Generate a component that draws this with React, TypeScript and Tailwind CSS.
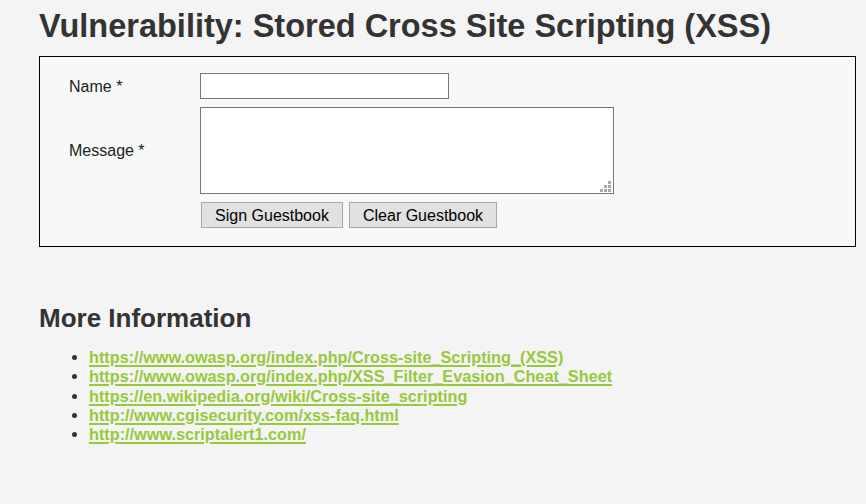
import React from "react";

export default function App() {
  const links = [
    "https://www.owasp.org/index.php/Cross-site_Scripting_(XSS)",
    "https://www.owasp.org/index.php/XSS_Filter_Evasion_Cheat_Sheet",
    "https://en.wikipedia.org/wiki/Cross-site_scripting",
    "http://www.cgisecurity.com/xss-faq.html",
    "http://www.scriptalert1.com/",
  ];
  return (
    <div className="w-[866px] h-[504px] bg-[#f4f4f4] text-[#333] overflow-hidden" style={{ fontFamily: '"Liberation Sans", Arial, sans-serif' }}>
      <div className="pl-[39px] pr-[10px]">
        <h1 className="text-[32.5px] font-bold leading-[37px] pt-[8px] text-[#333]">
          Vulnerability: Stored Cross Site Scripting (XSS)
        </h1>
        <div className="mt-[11px] w-[817px] h-[191px] border border-black bg-[#f7f8f8] pl-[29px] pt-[16px]">
          <div className="flex items-center h-[26px]">
            <div className="w-[131px] text-[16px] leading-[20px] pt-[1px] text-[#222]">Name *</div>
            <div className="w-[249px] h-[26px] border border-[#767676] bg-white"></div>
          </div>
          <div className="flex items-center mt-[8px] h-[87px]">
            <div className="w-[131px] text-[16px] text-[#222]">Message *</div>
            <div className="relative w-[414px] h-[87px] border border-[#767676] bg-white">
              <svg className="absolute right-[2px] bottom-[1px]" width="11" height="11" viewBox="0 0 11 11">
                <rect x="8" y="0" width="3" height="3" fill="#a8a8a8" />
                <rect x="4" y="4" width="3" height="3" fill="#a8a8a8" />
                <rect x="8" y="4" width="3" height="3" fill="#a8a8a8" />
                <rect x="0" y="8" width="3" height="3" fill="#a8a8a8" />
                <rect x="4" y="8" width="3" height="3" fill="#a8a8a8" />
                <rect x="8" y="8" width="3" height="3" fill="#a8a8a8" />
              </svg>
            </div>
          </div>
          <div className="flex ml-[132px] mt-[8px] gap-[6px]">
            <button className="h-[26px] w-[142px] border border-[#a9a9a9] bg-[#e1e1e1] text-[16px] leading-[20px] pt-[1px] text-black">Sign Guestbook</button>
            <button className="h-[26px] w-[148px] border border-[#a9a9a9] bg-[#e1e1e1] text-[16px] leading-[20px] pt-[1px] text-black">Clear Guestbook</button>
          </div>
        </div>
        <h2 className="mt-[56px] text-[26px] font-bold leading-[30px] text-[#333]">More Information</h2>
        <ul className="mt-[15px] ml-[38px] list-disc pl-[12px]">
          {links.map((l) => (
            <li key={l} className="text-[16.25px] leading-[19.25px] font-bold">
              <a className="text-[#98c93c] underline decoration-[2px] underline-offset-[2px]" href="#">{l}</a>
            </li>
          ))}
        </ul>
      </div>
    </div>
  );
}
